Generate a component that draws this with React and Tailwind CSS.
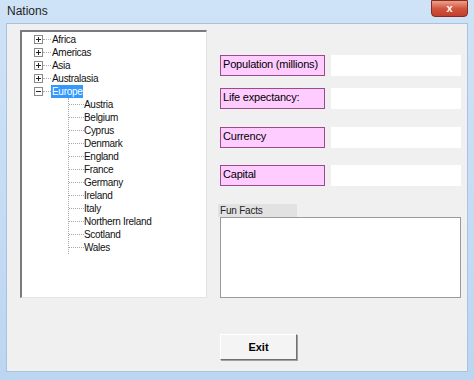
import React from "react";

const regions = ["Africa", "Americas", "Asia", "Australasia"];
const europe = [
  "Austria",
  "Belgium",
  "Cyprus",
  "Denmark",
  "England",
  "France",
  "Germany",
  "Ireland",
  "Italy",
  "Northern Ireland",
  "Scotland",
  "Wales",
];

const ExpandBox = ({ open }) => (
  <svg width="9" height="9" viewBox="0 0 9 9" className="shrink-0">
    <rect x="0.5" y="0.5" width="8" height="8" fill="#fff" stroke="#8a8a8a" />
    <line x1="2" y1="4.5" x2="7" y2="4.5" stroke="#222" />
    {!open && <line x1="4.5" y1="2" x2="4.5" y2="7" stroke="#222" />}
  </svg>
);

const Field = ({ label, className = "" }) => (
  <div className={`flex gap-[6px] ${className}`}>
    <div className="w-[105px] h-[21px] bg-[#ffccff] border border-[#9c4a8c] px-[2px] text-[11px] tracking-[-0.2px] leading-[17px] text-black whitespace-nowrap">
      {label}
    </div>
    <div className="w-[130px] h-[21px] bg-white" />
  </div>
);

export default function App() {
  return (
    <div
      className="w-[474px] h-[380px] bg-gradient-to-b from-[#cfe3f7] to-[#bcd6f1] flex flex-col overflow-hidden"
      style={{ fontFamily: "'Liberation Sans', Arial, sans-serif" }}
    >
      <div className="h-[23px] flex items-start justify-between pl-[7px] pr-[6px] shrink-0">
        <span className="text-[12px] leading-[22px] text-[#1e1e1e]">Nations</span>
        <div className="w-[37px] h-[17px] rounded-b-[4px] border border-[#8a2a1e] bg-gradient-to-b from-[#e9a08c] via-[#d2553e] to-[#c0402c] flex items-center justify-center">
          <span className="text-white text-[11px] font-bold leading-none">x</span>
        </div>
      </div>
      <div className="mx-[6px] mb-[8px] flex-1 bg-[#f0f0f0] border border-[#a9c3de] flex pt-[6px] pl-[13px]">
        <div className="w-[187px] h-[268px] bg-white border-t-2 border-l-2 border-[#7a7a7a] border-r border-b border-r-[#e3e3e3] border-b-[#e3e3e3] pt-[1px]">
          <div className="text-[10px] tracking-[-0.3px] leading-[13px] text-[#111]">
            {regions.map((r) => (
              <div key={r} className="flex items-center h-[13px] pl-[12px]">
                <ExpandBox open={false} />
                <div className="w-[8px] border-t border-dotted border-[#aaa]" />
                <span className="pl-[1px]">{r}</span>
              </div>
            ))}
            <div className="flex items-center h-[13px] pl-[12px]">
              <ExpandBox open />
              <div className="w-[8px] border-t border-dotted border-[#aaa]" />
              <span className="bg-[#3399ff] text-white px-[1px] h-[13px]">Europe</span>
            </div>
            <div className="ml-[46px] border-l border-dotted border-[#aaa] w-fit pr-[2px] mb-[7px]">
              {europe.map((c) => (
                <div key={c} className="flex items-center h-[13px]">
                  <div className="w-[15px] border-t border-dotted border-[#aaa]" />
                  <span>{c}</span>
                </div>
              ))}
            </div>
          </div>
        </div>
        <div className="ml-[13px] flex flex-col pt-[25px]">
          <Field label="Population (millions)" />
          <Field label="Life expectancy:" className="mt-[12px]" />
          <Field label="Currency" className="mt-[18px]" />
          <Field label="Capital" className="mt-[17px]" />
          <div className="mt-[18px] -ml-[2px] w-[79px] h-[13px] bg-[#e2e2e2] text-[10px] tracking-[-0.2px] leading-[13px] pl-[2px] text-[#222]">
            Fun Facts
          </div>
          <div className="w-[241px] h-[81px] bg-white border border-[#9a9a9a]" />
          <button className="mt-[36px] w-[77px] h-[26px] bg-[#f4f4f4] border border-t-white border-l-white border-r-[#707070] border-b-[#707070] shadow-[1px_1px_0_#a0a0a0] text-[11px] font-bold text-black">
            Exit
          </button>
        </div>
      </div>
    </div>
  );
}
